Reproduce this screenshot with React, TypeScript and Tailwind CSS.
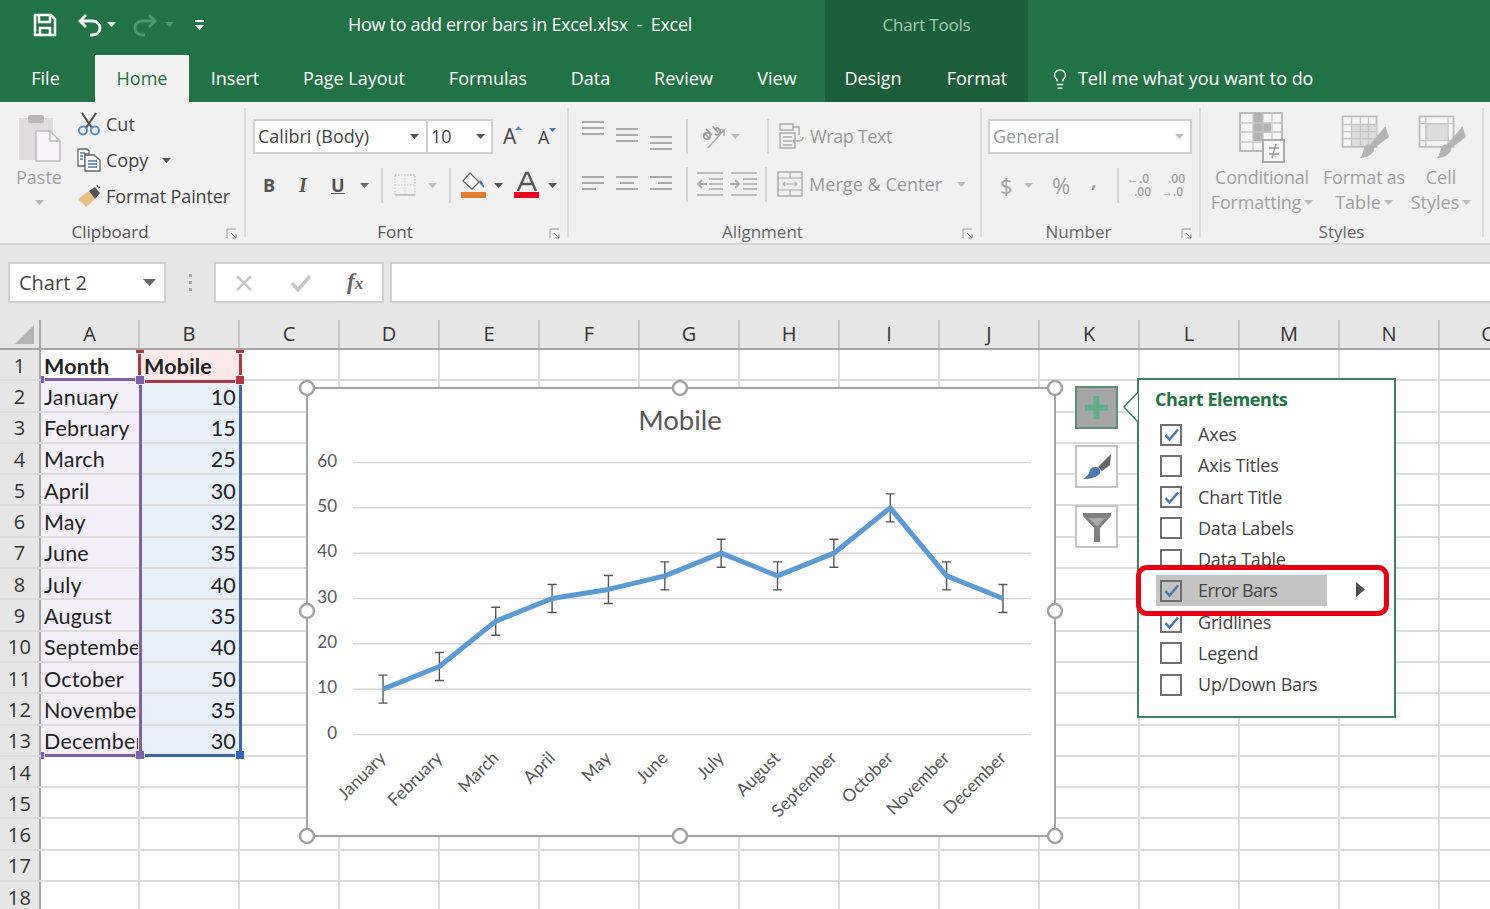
import React from 'react';
import { Lightbulb } from 'lucide-react';

const tabs = [
  { label: 'File', w: 'w-[95px] pr-[4px]' },
  { label: 'Home', w: 'w-[94px]', active: true },
  { label: 'Insert', w: 'w-[92px]' },
  { label: 'Page Layout', w: 'w-[146px]' },
  { label: 'Formulas', w: 'w-[122px]' },
  { label: 'Data', w: 'w-[83px]' },
  { label: 'Review', w: 'w-[103px]' },
  { label: 'View', w: 'w-[90px] pr-[6px]' },
];

const months = ['January','February','March','April','May','June','July','August','September','October','November','December'];
const values = [10,15,25,30,32,35,40,35,40,50,35,30];
const columns = ['C','D','E','F','G','H','I','J','K','L','M','N','O'];

const elements = [
  { label: 'Axes', on: true },
  { label: 'Axis Titles', on: false },
  { label: 'Chart Title', on: true },
  { label: 'Data Labels', on: false },
  { label: 'Data Table', on: false },
  { label: 'Error Bars', on: true, active: true },
  { label: 'Gridlines', on: true },
  { label: 'Legend', on: false },
  { label: 'Up/Down Bars', on: false },
];

const Caret = ({ className = 'text-[#666]' }: { className?: string }) => (
  <svg width="9" height="5" viewBox="0 0 9 5" className={`shrink-0 ${className}`}><path d="M0 0h9L4.500 5z" fill="currentColor" /></svg>
);

const Launcher = () => (
  <svg width="12" height="12" viewBox="0 0 12 12" className="absolute right-[6px] bottom-[-3px]">
    <path d="M1 10V1h9" fill="none" stroke="#999" />
    <path d="M5 5l5 5M10 6.500V10H6.500" fill="none" stroke="#777" />
  </svg>
);

const Group = ({ w, label, launcher, labelClass = 'text-[#555]', children }: { w: string; label: string; launcher?: boolean; labelClass?: string; children: React.ReactNode }) => (
  <div className={`relative my-[6px] flex shrink-0 flex-col border-r-2 border-[#dcdcdc] ${w}`}>
    <div className="h-[113px] shrink-0">{children}</div>
    <div className={`h-[22px] shrink-0 text-center text-[17px] leading-[22px] ${launcher ? 'pr-[24px]' : ''} ${labelClass}`}>{label}</div>
    {launcher && <Launcher />}
  </div>
);

const Sep = () => <div className="h-[35px] w-[2px] shrink-0 bg-[#d6d6d6]" />;

const Lines = ({ widths, x = 'left' }: { widths: number[]; x?: 'left' | 'center' | 'right' }) => (
  <svg width="22" height="18" viewBox="0 0 22 18" className="shrink-0">
    {widths.map((w, i) => {
      const x1 = x === 'left' ? 0 : x === 'right' ? 22 - w : (22 - w) / 2;
      return <rect key={i} x={x1} y={i * 6 + 1} width={w} height="2" fill="#aaa" />;
    })}
  </svg>
);

const StackLines = ({ top }: { top: number }) => (
  <svg width="22" height="34" viewBox="0 0 22 34" className="shrink-0">
    {[0, 6, 12].map(o => <rect key={o} x="0" y={top + o} width="22" height="2" fill="#aaa" />)}
  </svg>
);

const Check = () => (
  <svg width="17" height="15" viewBox="0 0 17 15"><path d="M2.500 8l4 4.500L15 2.500" fill="none" stroke="#4a7ab0" strokeWidth="2.500" /></svg>
);

const Box = ({ on }: { on: boolean }) => (
  <div className="flex h-[22px] w-[22px] shrink-0 items-center justify-center border-2 border-[#6f6f6f]">{on && <Check />}</div>
);

const ColHead = ({ label, w = 'w-[100px]' }: { label: string; w?: string }) => (
  <div className={`flex h-full shrink-0 items-center justify-center border-r-2 border-[#c6c6c6] text-[20px] text-[#333] ${w}`}>{label}</div>
);

const TableStyleIcon = ({ kind }: { kind: 'format' | 'cell' }) => (
  <svg width="50" height="48" viewBox="0 0 56 52" className="mt-[5px]">
    <rect x="4" y="3" width="38" height="34" fill="#f6f6f6" stroke="#bbb" strokeWidth="2" />
    {kind === 'format' ? (
      <>
        <rect x="14" y="12" width="28" height="24" fill="#dcdcdc" />
        <path d="M5 12h36M5 20h36M5 28h36M14 4v32M24 4v32M33 4v32" stroke="#c4c4c4" strokeWidth="1.500" />
      </>
    ) : (
      <>
        <rect x="11" y="11" width="25" height="19" fill="#dcdcdc" />
        <path d="M5 11h36M5 30h36M11 4v32M36 4v32" stroke="#c4c4c4" strokeWidth="1.500" />
      </>
    )}
    <path d="M52 14L56 26 40 38l-5-4z" fill="#b4b4b4" />
    <path d="M33 34c5 0 8 4 6 8-3 5-9 7-16 8 4-4 4-8 5-11 1-3 3-5 5-5z" fill="#b4b4b4" />
  </svg>
);

function Chart() {
  const base = 734.5;
  const xs = values.map((_, i) => 383 + i * 56.36);
  const ys = values.map(v => base - v * 4.533);
  const handles = [[307,388],[680,388],[1055,388],[307,611],[1055,611],[307,836],[680,836],[1055,836]];
  return (
    <svg width="775" height="472" viewBox="295 376 775 472" className="absolute left-[295px] top-[376px] font-['Lato',sans-serif]">
      <rect x="307" y="388" width="748" height="448" fill="#fff" stroke="#a3a3a3" strokeWidth="2" />
      <text x="680" y="430" textAnchor="middle" fontSize="27.500" fill="#595959">Mobile</text>
      {[0,10,20,30,40,50,60].map(v => (
        <g key={v}>
          <line x1="353" x2="1031" y1={base - v * 4.533} y2={base - v * 4.533} stroke="#d9d9d9" strokeWidth="1.500" />
          <text x="337" y={base - v * 4.533 + 4} textAnchor="end" fontSize="17" fill="#595959">{v}</text>
        </g>
      ))}
      {xs.map((x, i) => (
        <path key={i} d={`M${x} ${ys[i] - 14}v28M${x - 4.500} ${ys[i] - 14}h9M${x - 4.500} ${ys[i] + 14}h9`} stroke="#555" strokeWidth="1.400" fill="none" />
      ))}
      <polyline points={xs.map((x, i) => `${x},${ys[i]}`).join(' ')} fill="none" stroke="#5b9bd5" strokeWidth="5" strokeLinejoin="round" />
      {months.map((m, i) => (
        <text key={m} transform={`translate(${xs[i] + 4} ${759}) rotate(-45)`} textAnchor="end" fontSize="17.500" fill="#595959">{m}</text>
      ))}
      {handles.map(([x, y]) => <circle key={`${x}-${y}`} cx={x} cy={y} r="7" fill="#fff" stroke="#a3a3a3" strokeWidth="2.500" />)}
    </svg>
  );
}

export default function App() {
  return (
    <div className="relative h-[909px] w-[1490px] overflow-hidden bg-white font-['Open_Sans',sans-serif]">
      {/* title bar */}
      <div className="flex h-[55px] bg-[#217346] text-white">
        <div className="flex w-[348px] shrink-0 items-center pb-[6px]">
          <svg width="24" height="24" viewBox="0 0 24 24" className="ml-[33px]">
            <path d="M2 2h16l4 4v16H2z" fill="none" stroke="#fff" strokeWidth="2.500" />
            <path d="M6 2v7h11V2M7 22v-7h10v7" fill="none" stroke="#fff" strokeWidth="2.500" />
          </svg>
          <svg width="25" height="24" viewBox="0 0 25 24" className="ml-[21px]">
            <path d="M8 2L2 8l6 6" fill="none" stroke="#fff" strokeWidth="2.800" />
            <path d="M3 8h11c5 0 8 3 8 7s-3 7-8 7h-2" fill="none" stroke="#fff" strokeWidth="2.800" />
          </svg>
          <Caret className="ml-[4px] text-white" />
          <svg width="25" height="24" viewBox="0 0 25 24" className="ml-[16px]">
            <path d="M17 2l6 6-6 6" fill="none" stroke="#4f9a72" strokeWidth="2.800" />
            <path d="M22 8H11c-5 0-8 3-8 7s3 7 8 7h2" fill="none" stroke="#4f9a72" strokeWidth="2.800" />
          </svg>
          <Caret className="ml-[8px] text-[#4f9a72]" />
          <svg width="9" height="12" viewBox="0 0 9 12" className="ml-[21px]"><path d="M0 1h9v2H0zM0 6h9L4.500 11z" fill="#fff" /></svg>
        </div>
        <div className="flex w-[477px] shrink-0 items-center pb-[6px] text-[18px] tracking-[-0.3px]">How to add error bars in Excel.xlsx&nbsp; -&nbsp; Excel</div>
        <div className="flex w-[203px] shrink-0 items-center justify-center bg-[#1c5e3a] pb-[6px] text-[17px] tracking-[-0.2px] text-[#a9c9b6]">Chart Tools</div>
      </div>
      {/* tabs */}
      <div className="flex h-[47px] bg-[#217346] text-[18px] text-white">
        {tabs.map(t => (
          <div key={t.label} className={`flex shrink-0 items-center justify-center ${t.w} ${t.active ? 'bg-[#f1f1f1] text-[#217346]' : ''}`}>{t.label}</div>
        ))}
        <div className="flex w-[203px] shrink-0 bg-[#1c5e3a]">
          <div className="flex w-[96px] items-center justify-center">Design</div>
          <div className="flex w-[107px] items-center justify-center pl-[5px]">Format</div>
        </div>
        <div className="flex items-center pl-[21px]">
          <Lightbulb size={22} strokeWidth={1.500} />
          <span className="ml-[7px] tracking-[-0.05px]">Tell me what you want to do</span>
        </div>
      </div>
      {/* ribbon */}
      <div className="flex h-[143px] border-b-2 border-[#d6d6d6] bg-[#f1f1f1] text-[18px] text-[#444]">
        <Group w="w-[246px]" label="Clipboard" launcher>
          <div className="flex">
            <div className="ml-[14px] flex w-[50px] flex-col items-center pt-[5px]">
              <svg width="50" height="52" viewBox="0 0 50 52">
                <rect x="5" y="5" width="34" height="42" fill="#dedcdc" />
                <rect x="14" y="2" width="16" height="8" rx="2" fill="#b8b6b6" />
                <path d="M22 18h14l10 10v20H22z" fill="#f5f3f5" stroke="#bcbcbc" strokeWidth="1.500" />
                <path d="M36 18v10h10" fill="none" stroke="#bcbcbc" strokeWidth="1.500" />
              </svg>
              <div className="mt-[-1px] text-[#a0a0a0]">Paste</div>
              <Caret className="mt-[9px] text-[#b4b4b4]" />
            </div>
            <div className="ml-[13px] mt-[-2px] flex flex-col">
              <div className="flex h-[36px] items-center">
                <svg width="24" height="24" viewBox="0 0 24 24">
                  <path d="M5 1l10 15M19 1L9 16" stroke="#555" strokeWidth="2.200" fill="none" />
                  <circle cx="6" cy="18.500" r="4" fill="none" stroke="#5a8fc0" strokeWidth="2" />
                  <circle cx="18" cy="18.500" r="4" fill="none" stroke="#5a8fc0" strokeWidth="2" />
                </svg>
                <span className="ml-[5px]">Cut</span>
              </div>
              <div className="flex h-[36px] items-center">
                <svg width="24" height="24" viewBox="0 0 24 24">
                  <path d="M1 1h9l2 2v3H8v12H1z" fill="#fff" stroke="#666" strokeWidth="1.300" />
                  <path d="M8 7h9l6 5v11H8z" fill="#fff" stroke="#666" strokeWidth="1.300" />
                  <path d="M11 13h9M11 16h9M11 19h9M3 5h5M3 8h3M3 11h3" stroke="#4a7ab0" strokeWidth="1.300" />
                </svg>
                <span className="ml-[5px]">Copy</span>
                <Caret className="ml-[14px] text-[#555]" />
              </div>
              <div className="flex h-[36px] items-center">
                <svg width="24" height="24" viewBox="0 0 24 24">
                  <path d="M1 15l11-8 6 8-9 8C8 20 3 18 1 15z" fill="#eac17f" />
                  <path d="M12 7l6 8 5-6-5-6z" fill="#555" />
                  <path d="M20 1l1 2M23 3l-2 1" stroke="#555" strokeWidth="1.500" />
                </svg>
                <span className="ml-[5px] tracking-[-0.1px]">Format Painter</span>
              </div>
            </div>
          </div>
        </Group>
        <div className="w-[1px] shrink-0" />
        <Group w="w-[322px]" label="Font" launcher>
          <div className="ml-[6px] mt-[11px] flex h-[35px] items-center">
            <div className="flex h-full w-[173px] items-center justify-between border-2 border-r-0 border-[#d0d0d0] bg-white pl-[3px] pr-[7px]">
              <span>Calibri (Body)</span><Caret className="text-[#555]" />
            </div>
            <div className="flex h-full w-[67px] items-center justify-between border-2 border-[#d0d0d0] bg-white pl-[3px] pr-[6px]">
              <span>10</span><Caret className="text-[#555]" />
            </div>
            <div className="ml-[10px] flex w-[20px] items-end text-[21px] leading-none">A<svg width="7" height="4" viewBox="0 0 7 4" className="mb-[17px] ml-[-1px]"><path d="M0 4l3.500-4L7 4z" fill="#5a8fc0" /></svg></div>
            <div className="ml-[15px] flex w-[20px] items-end text-[18px] leading-none">A<svg width="7" height="4" viewBox="0 0 7 4" className="mb-[14px]"><path d="M0 0h7L3.500 4z" fill="#4a7ab0" /></svg></div>
          </div>
          <div className="ml-[16px] mt-[12px] flex h-[38px] items-center">
            <span className="w-[36px] text-[18px] font-bold text-[#555]">B</span>
            <span className="w-[32px] font-['Liberation_Serif',serif] text-[20px] font-bold italic text-[#555]">I</span>
            <span className="w-[29px] text-[18px] font-bold text-[#555] underline">U</span>
            <Caret className="text-[#666]" />
            <div className="ml-[12px]"><Sep /></div>
            <svg width="22" height="22" viewBox="0 0 22 22" className="ml-[11px]">
              <rect x="1" y="1" width="20" height="20" fill="none" stroke="#bbb" strokeDasharray="1.500 1.500" />
              <path d="M11 1v20M1 11h20" stroke="#ccc" strokeDasharray="1.500 1.500" />
              <path d="M1 21h20" stroke="#bbb" strokeWidth="1.500" />
            </svg>
            <Caret className="ml-[12px] text-[#bbb]" />
            <div className="ml-[12px]"><Sep /></div>
            <svg width="26" height="28" viewBox="0 0 26 28" className="ml-[10px]">
              <path d="M9 2l9 9-7 7-9-8z" fill="#fff" stroke="#666" strokeWidth="1.300" />
              <path d="M19 9c3 2 4 5 4 8-2-2-4-4-5-6z" fill="#4a7ab0" />
              <rect x="0" y="21" width="25" height="6" fill="#e47e2c" />
            </svg>
            <Caret className="ml-[7px] text-[#555]" />
            <svg width="26" height="28" viewBox="0 0 26 28" className="ml-[11px]">
              <path d="M4 20L12 2h2l8 18M8 13h10" fill="none" stroke="#555" strokeWidth="2.400" />
              <rect x="0" y="21" width="25" height="6" fill="#e8001c" />
            </svg>
            <Caret className="ml-[8px] text-[#555]" />
          </div>
        </Group>
        <Group w="w-[413px]" label="Alignment" launcher labelClass="text-[#666]">
          <div className="ml-[13px] mt-[8px] flex h-[40px] items-center text-[#a0a0a0]">
            <div className="w-[34px]"><StackLines top={2} /></div>
            <div className="w-[34px]"><StackLines top={9} /></div>
            <div className="w-[36px]"><StackLines top={17} /></div>
            <Sep />
            <svg width="30" height="30" viewBox="0 0 30 30" className="ml-[10px]">
              <g fill="none" stroke="#999" strokeWidth="1.600">
                <circle cx="9" cy="15" r="3.200" />
                <path d="M12 18l-6-6M8 8l6 6M14.500 5.500l6 6M17 8a3.200 3.200 0 1 1 0 5" />
              </g>
              <path d="M10 27L26 9M20 9h6v6" fill="none" stroke="#aaa" strokeWidth="1.500" />
            </svg>
            <Caret className="ml-[3px] text-[#bbb]" />
            <div className="ml-[27px]"><Sep /></div>
            <svg width="26" height="26" viewBox="0 0 26 26" className="ml-[10px] shrink-0">
              <path d="M1 1h13v6H1zM1 10h15v15H1zM4 14h9M4 18h9M4 22h9M14 4h6v8M24 14c0 3-2 4-5 4h-5M17 15l-3 3 3 3" fill="none" stroke="#aaa" strokeWidth="1.400" />
            </svg>
            <span className="ml-[5px] text-[#999] tracking-[-0.4px]">Wrap Text</span>
          </div>
          <div className="ml-[13px] mt-[9px] flex h-[38px] items-center text-[#a0a0a0]">
            <div className="w-[34px]"><Lines widths={[22,22,14,22]} /></div>
            <div className="w-[34px]"><Lines widths={[22,14,22]} x="center" /></div>
            <div className="w-[36px]"><Lines widths={[22,14,22]} x="right" /></div>
            <Sep />
            <svg width="60" height="24" viewBox="0 0 60 24" className="ml-[9px] shrink-0">
              <path d="M0 1h26M12 7h14M12 12h14M12 17h14M0 23h26M34 1h26M46 7h14M46 12h14M46 17h14M34 23h26" stroke="#aaa" strokeWidth="1.700" />
              <path d="M1 12h9M5 8l-4 4 4 4M33 12h9M38 8l4 4-4 4" fill="none" stroke="#aaa" strokeWidth="1.800" />
            </svg>
            <div className="ml-[8px]"><Sep /></div>
            <svg width="26" height="26" viewBox="0 0 26 26" className="ml-[10px] shrink-0">
              <rect x="1" y="1" width="24" height="24" fill="none" stroke="#aaa" strokeWidth="1.500" />
              <path d="M1 7h24M1 19h24M13 1v6M13 19v6M6 13h14M8 11l-2 2 2 2M18 11l2 2-2 2" fill="none" stroke="#aaa" strokeWidth="1.200" />
            </svg>
            <span className="ml-[6px] whitespace-nowrap text-[#999] tracking-[0.05px]">Merge &amp; Center</span>
            <Caret className="ml-[15px] text-[#bbb]" />
          </div>
        </Group>
        <Group w="w-[219px]" label="Number" launcher labelClass="text-[#666]">
          <div className="ml-[6px] mt-[11px] flex h-[35px] w-[204px] items-center justify-between border-2 border-[#d0d0d0] bg-white pl-[3px] pr-[6px] text-[#999]">
            <span>General</span><Caret className="text-[#bbb]" />
          </div>
          <div className="ml-[18px] mt-[12px] flex h-[38px] items-center text-[#a0a0a0]">
            <span className="w-[24px] text-[22px]">$</span>
            <Caret className="text-[#bbb]" />
            <span className="ml-[19px] w-[39px] text-[22px]">%</span>
            <span className="mb-[10px] w-[26px] text-[20px] font-bold">,</span>
            <Sep />
            <div className="ml-[8px] flex w-[25px] flex-col text-[12px] font-semibold">
              <span className="h-[13px] leading-[13px]">←.0</span>
              <span className="ml-[7px] h-[13px] leading-[13px]">.00</span>
            </div>
            <div className="ml-[9px] flex flex-col text-[12px] font-semibold">
              <span className="ml-[7px] h-[13px] leading-[13px]">.00</span>
              <span className="h-[13px] leading-[13px]">→.0</span>
            </div>
          </div>
        </Group>
        <Group w="w-[283px]" label="Styles" labelClass="text-[#666]">
          <div className="flex text-[#a0a0a0]">
            <div className="flex w-[120px] shrink-0 flex-col items-center pl-[2px]">
              <svg width="46" height="52" viewBox="0 0 46 52" className="mt-[4px]">
                <rect x="1" y="1" width="42" height="38" fill="#f6f6f6" stroke="#bbb" strokeWidth="2" />
                <path d="M14 1h10v10h8v10h-8v8h-10z" fill="#b2b2b2" />
                <path d="M1 11h42M1 20h42M1 30h42M14 1v38M24 1v38M33 1v38" stroke="#c8c8c8" strokeWidth="1.300" />
                <rect x="24" y="28" width="21" height="22" fill="#f6f6f6" stroke="#aaa" strokeWidth="2" />
                <path d="M30 36h10M30 42h10M37 32l-4 14" stroke="#999" strokeWidth="1.500" />
              </svg>
              <div className="mt-[1px] leading-[25px] tracking-[-0.2px]">Conditional</div>
              <div className="flex items-center leading-[25px] tracking-[-0.2px]">Formatting<Caret className="ml-[3px] text-[#bbb]" /></div>
            </div>
            <div className="flex w-[86px] shrink-0 flex-col items-center">
              <TableStyleIcon kind="format" />
              <div className="mt-[4px] whitespace-nowrap leading-[25px] tracking-[-0.2px]">Format as</div>
              <div className="flex items-center leading-[25px]">Table<Caret className="ml-[3px] text-[#bbb]" /></div>
            </div>
            <div className="flex w-[68px] shrink-0 flex-col items-center">
              <TableStyleIcon kind="cell" />
              <div className="mt-[4px] leading-[25px]">Cell</div>
              <div className="flex items-center leading-[25px]">Styles<Caret className="ml-[3px] text-[#bbb]" /></div>
            </div>
          </div>
        </Group>
      </div>
      {/* formula bar */}
      <div className="flex h-[75px] bg-[#e6e6e6] pt-[17px]">
        <div className="ml-[8px] flex h-[41px] w-[158px] items-center justify-between border-2 border-[#d0d0d0] bg-white pl-[9px] pr-[8px] text-[20px] text-[#444]">
          <span>Chart 2</span><svg width="13" height="7" viewBox="0 0 13 7"><path d="M0 0h13L6.500 7z" fill="#666" /></svg>
        </div>
        <div className="flex h-[41px] w-[48px] shrink-0 flex-col items-center justify-center gap-[4px]">
          <div className="h-[3px] w-[3px] bg-[#aaa]" /><div className="h-[3px] w-[3px] bg-[#aaa]" /><div className="h-[3px] w-[3px] bg-[#aaa]" />
        </div>
        <div className="flex h-[41px] w-[170px] shrink-0 items-center border-2 border-[#d0d0d0] bg-white">
          <svg width="18" height="18" viewBox="0 0 18 18" className="ml-[19px]"><path d="M2 2l14 14M16 2L2 16" stroke="#c8c8c8" strokeWidth="2.500" /></svg>
          <svg width="22" height="18" viewBox="0 0 22 18" className="ml-[37px]"><path d="M2 9l6 7L20 2" fill="none" stroke="#c8c8c8" strokeWidth="3.500" /></svg>
          <span className="ml-[35px] font-['Liberation_Serif',serif] text-[23px] font-bold italic text-[#666]">f<span className="text-[17px]">x</span></span>
        </div>
        <div className="ml-[6px] h-[41px] flex-1 border-y-2 border-l-2 border-[#d0d0d0] bg-white" />
      </div>
      {/* sheet */}
      <div className="h-[30px] bg-[#e6e6e6]">
        <div className="flex h-full border-b-2 border-[#a6a6a6]">
          <div className="flex h-full w-[41px] shrink-0 items-end justify-end border-r-2 border-[#a6a6a6] pb-[4px] pr-[5px]">
            <svg width="19" height="19" viewBox="0 0 19 19"><path d="M19 0v19H0z" fill="#b4b4b4" /></svg>
          </div>
          <ColHead label="A" w="w-[99px]" />
          <ColHead label="B" />
          {columns.map(c => <ColHead key={c} label={c} />)}
        </div>
      </div>
      <div className="font-['Lato',sans-serif] text-[21.5px] tracking-[0.2px] text-[#222]">
        {Array.from({ length: 18 }, (_, i) => {
          const inData = i >= 1 && i <= 12;
          return (
            <div key={i} className="flex h-[31.3px] border-b-2 border-[#dcdcdc]">
              <div className="flex w-[41px] shrink-0 items-center justify-center border-r-2 border-[#a6a6a6] bg-[#e6e6e6] pt-[2px] text-[20px] font-['Open_Sans',sans-serif] text-[#333]">{i + 1}</div>
              <div className={`flex w-[99px] shrink-0 items-center overflow-hidden whitespace-nowrap border-r-2 pl-[3px] pt-[2px] ${inData ? 'border-transparent bg-[#f3eff8]' : 'border-[#dcdcdc]'} ${i === 0 ? 'font-bold' : ''}`}>
                {i === 0 ? 'Month' : inData ? months[i - 1] : ''}
              </div>
              <div className={`flex w-[100px] shrink-0 items-center overflow-hidden border-r-2 pl-[4px] pr-[2px] pt-[2px] ${inData ? 'justify-end border-transparent bg-[#e7eff8]' : 'border-[#dcdcdc]'} ${i === 0 ? 'border-transparent bg-[#fae9e8] font-bold' : ''}`}>
                {i === 0 ? 'Mobile' : inData ? values[i - 1] : ''}
              </div>
              {columns.map(c => <div key={c} className="w-[100px] shrink-0 border-r-2 border-[#dcdcdc]" />)}
            </div>
          );
        })}
      </div>

      {/* range highlights */}
      <div className="absolute left-[45px] top-[378px] h-[3px] w-[90px] bg-[#7f5fa8]" />
      <div className="absolute left-[45px] top-[754px] h-[3px] w-[90px] bg-[#7f5fa8]" />
      <div className="absolute left-[139px] top-[385px] h-[366px] w-[3px] bg-[#7f5fa8]" />
      <div className="absolute left-[41px] top-[376px] h-[7px] w-[3px] bg-[#7f5fa8]" />
      <div className="absolute left-[41px] top-[752px] h-[7px] w-[3px] bg-[#7f5fa8]" />
      <div className="absolute left-[136px] top-[376px] h-[8px] w-[8px] bg-[#7f5fa8]" />
      <div className="absolute left-[136px] top-[751px] h-[8px] w-[8px] bg-[#7f5fa8]" />
      <div className="absolute left-[136px] top-[350px] h-[3px] w-[8px] bg-[#a83a46]" />
      <div className="absolute left-[236px] top-[350px] h-[3px] w-[8px] bg-[#a83a46]" />
      <div className="absolute left-[138px] top-[354px] h-[21px] w-[3px] bg-[#a83a46]" />
      <div className="absolute left-[239px] top-[354px] h-[21px] w-[3px] bg-[#a83a46]" />
      <div className="absolute left-[145px] top-[380px] h-[3px] w-[90px] bg-[#a83a46]" />
      <div className="absolute left-[236px] top-[376px] h-[8px] w-[8px] bg-[#b5323f]" />
      <div className="absolute left-[239px] top-[385px] h-[366px] w-[3px] bg-[#3b66a8]" />
      <div className="absolute left-[145px] top-[754px] h-[3px] w-[90px] bg-[#3b66a8]" />
      <div className="absolute left-[236px] top-[751px] h-[8px] w-[8px] bg-[#3465b8]" />

      <Chart />

      {/* chart side buttons */}
      <div className="absolute left-[1075px] top-[386px] flex h-[43px] w-[43px] items-center justify-center border-2 border-[#5b8f76] bg-[#a6a6a6]">
        <svg width="23" height="23" viewBox="0 0 23 23"><path d="M8.500 0h6v8.500H23v6h-8.500V23h-6v-8.500H0v-6h8.500z" fill="#5fae88" /></svg>
      </div>
      <div className="absolute left-[1075px] top-[445px] flex h-[43px] w-[43px] items-center justify-center border-2 border-[#c4c4c4] bg-white">
        <svg width="30" height="28" viewBox="0 0 30 28">
          <path d="M29 1l-1 11-8 6-4-4z" fill="#666" />
          <path d="M14 14c3 0 5 3 4 6-2 4-9 6-17 6 5-3 6-6 7-9 1-2 3-3 6-3z" fill="#4a7ab0" />
        </svg>
      </div>
      <div className="absolute left-[1075px] top-[505px] flex h-[43px] w-[43px] items-center justify-center border-2 border-[#c4c4c4] bg-white">
        <svg width="30" height="32" viewBox="0 0 30 32"><path d="M1 2h28v3L18 17v14h-6V17L1 5z" fill="#7f7f7f" /><path d="M7 7h16l-7 8h-2z" fill="#fff" fillOpacity="0.350" /></svg>
      </div>

      {/* chart elements flyout */}
      <svg width="16" height="32" viewBox="0 0 16 32" className="absolute left-[1123px] top-[392px] z-10">
        <path d="M15 0L1 15l14 15" fill="#fff" stroke="#3f7f64" strokeWidth="1.500" />
      </svg>
      <div className="absolute left-[1137px] top-[378px] h-[340px] w-[259px] border-2 border-[#3f7f64] bg-white text-[18px] text-[#444]">
        <div className="h-[39px] pl-[16px] pt-[6px] text-[18px] font-bold leading-[26px] tracking-[-0.4px] text-[#217346]">Chart Elements</div>
        {elements.map(el => (
          <div key={el.label} className="relative flex h-[31.25px] items-center pl-[21px]">
            {el.active ? (
              <div className="absolute left-[-3px] top-[-10px] z-10 h-[51px] w-[253px] rounded-[11px] border-[5px] border-[#e60012] bg-white">
                <div className="ml-[15px] mt-[5px] flex h-[31px] w-[171px] items-center bg-[#c4c4c4] pl-[4px]">
                  <Box on />
                  <span className="ml-[16px] tracking-[-0.6px]">{el.label}</span>
                </div>
                <svg width="9" height="15" viewBox="0 0 9 15" className="absolute left-[215px] top-[12px]"><path d="M0 0l9 7.500L0 15z" fill="#505050" /></svg>
              </div>
            ) : (
              <>
                <Box on={el.on} />
                <span className="ml-[16px] tracking-[-0.2px]">{el.label}</span>
              </>
            )}
          </div>
        ))}
      </div>
    </div>
  );
}
